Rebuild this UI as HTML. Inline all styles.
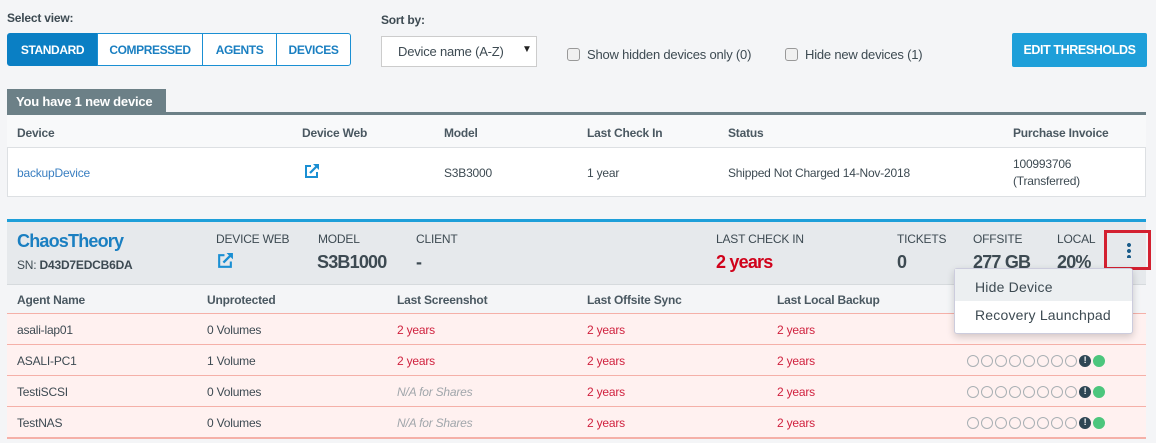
<!DOCTYPE html>
<html><head><meta charset="utf-8"><style>
*{box-sizing:border-box;margin:0;padding:0}
body{width:1156px;height:443px;background:#f4f5f7;font-family:"Liberation Sans",sans-serif;color:#3d4a52;position:relative;overflow:hidden;font-size:12px;letter-spacing:-0.2px}
.a{position:absolute;white-space:nowrap}
.b{font-weight:bold}
.btn{position:absolute;top:33px;height:33px;border:1px solid #1a8fd3;background:#fff;color:#1a7fc1;font-weight:bold;font-size:12px;letter-spacing:-0.4px;display:flex;align-items:center;justify-content:center}
.cb{position:absolute;width:13px;height:13px;border:1px solid #999;border-radius:3px;background:#f0f0f0;top:48px}
.th{font-weight:bold;color:#4a5861}
.row{position:absolute;left:7px;width:1139px;height:31px;background:#fff1f0;border-bottom:1px solid #f5b0a8}
.row span{position:absolute;top:9px}
.red{color:#d0223f}
.na{color:#a0a6ab;font-style:italic}
.lbl{font-size:12px;color:#3d4a52;top:232px}
.big{font-size:18px;font-weight:bold;top:252px;color:#3d4a52;letter-spacing:-0.8px}
.circ{position:absolute;top:355px;display:flex;gap:2px;left:967px}
.circ i{display:block;width:12px;height:12px;border:1.5px solid #a9b0b4;border-radius:50%}
.circ i.x{background:#2e4654;border-color:#2e4654;color:#fff;font-style:normal;font-size:9px;font-weight:bold;text-align:center;line-height:9px}
.circ i.g{background:#4cc67d;border-color:#4cc67d}
</style></head><body>
<div class="a b" style="left:7px;top:11px;font-size:12px">Select view:</div>
<div class="btn" style="left:7px;width:91px;background:#0a7fc4;color:#fff;border-color:#0a7fc4;border-radius:3px 0 0 3px">STANDARD</div>
<div class="btn" style="left:97px;width:106px">COMPRESSED</div>
<div class="btn" style="left:202px;width:75px">AGENTS</div>
<div class="btn" style="left:276px;width:75px;border-radius:0 3px 3px 0">DEVICES</div>
<div class="a b" style="left:381px;top:13px">Sort by:</div>
<div class="a" style="left:381px;top:36px;width:156px;height:31px;background:#fff;border:1px solid #ccc;font-size:13px"><span class="a" style="left:16px;top:7px">Device name (A-Z)</span><span class="a" style="left:140px;top:7px;font-size:10px;color:#222">▼</span></div>
<div class="cb" style="left:567px"></div><div class="a" style="left:587px;top:47px;font-size:13px">Show hidden devices only (0)</div>
<div class="cb" style="left:785px"></div><div class="a" style="left:805px;top:47px;font-size:13px">Hide new devices (1)</div>
<div class="a b" style="left:1012px;top:33px;width:135px;height:34px;background:#1e9fd9;color:#fff;font-size:12.5px;letter-spacing:-0.4px;display:flex;align-items:center;justify-content:center;border-radius:2px">EDIT THRESHOLDS</div>

<div class="a b" style="left:7px;top:89px;width:159px;height:24px;background:#6c8087;color:#fff;font-size:13px;padding:5px 0 0 9px">You have 1 new device</div>
<div class="a" style="left:7px;top:112px;width:1139px;height:3px;background:#6c8087"></div>
<div class="a" style="left:7px;top:115px;width:1139px;height:82px;background:#fff;border:1px solid #dde0e3;border-top:none"></div>
<div class="a" style="left:7px;top:115px;width:1139px;height:33px;background:#f8f9fa;border-bottom:1px solid #dde0e3"></div>
<div class="a th" style="left:17px;top:126px">Device</div>
<div class="a th" style="left:302px;top:126px">Device Web</div>
<div class="a th" style="left:444px;top:126px">Model</div>
<div class="a th" style="left:587px;top:126px">Last Check In</div>
<div class="a th" style="left:728px;top:126px">Status</div>
<div class="a th" style="left:1013px;top:126px">Purchase Invoice</div>
<div class="a" style="left:17px;top:166px;color:#3a7fc1">backupDevice</div>
<svg class="a" style="left:303px;top:163px" width="17" height="17" viewBox="0 0 17 17"><path d="M8 3H3v11h11V9" fill="none" stroke="#1a8fd3" stroke-width="2"/><path d="M10 1h6v6z" fill="#1a8fd3"/><path d="M7 10l7-7" stroke="#1a8fd3" stroke-width="2.2"/></svg>
<div class="a" style="left:444px;top:166px">S3B3000</div>
<div class="a" style="left:587px;top:166px">1 year</div>
<div class="a" style="left:728px;top:166px">Shipped Not Charged 14-Nov-2018</div>
<div class="a" style="left:1013px;top:156px;line-height:17px">100993706<br>(Transferred)</div>

<div class="a" style="left:7px;top:219px;width:1139px;height:3px;background:#1e9fd9"></div>
<div class="a" style="left:7px;top:222px;width:1139px;height:63px;background:#e6e9ec;border-bottom:1px solid #d6dadd"></div>
<div class="a b" style="left:17px;top:231px;font-size:18px;color:#1a7fc1;letter-spacing:-0.8px">ChaosTheory</div>
<div class="a" style="left:17px;top:258px;font-size:12px">SN: <b>D43D7EDCB6DA</b></div>
<div class="a lbl" style="left:216px">DEVICE WEB</div>
<svg class="a" style="left:216px;top:252px" width="18" height="18" viewBox="0 0 17 17"><path d="M8 3H3v11h11V9" fill="none" stroke="#1a8fd3" stroke-width="2"/><path d="M10 1h6v6z" fill="#1a8fd3"/><path d="M7 10l7-7" stroke="#1a8fd3" stroke-width="2.2"/></svg>
<div class="a lbl" style="left:318px">MODEL</div><div class="a big" style="left:317px">S3B1000</div>
<div class="a lbl" style="left:416px">CLIENT</div><div class="a big" style="left:416px">-</div>
<div class="a lbl" style="left:716px">LAST CHECK IN</div><div class="a big" style="left:716px;color:#d0021b">2 years</div>
<div class="a lbl" style="left:897px">TICKETS</div><div class="a big" style="left:897px">0</div>
<div class="a lbl" style="left:973px">OFFSITE</div><div class="a big" style="left:973px">277 GB</div>
<div class="a lbl" style="left:1057px">LOCAL</div><div class="a big" style="left:1057px">20%</div>
<div class="a" style="left:1104px;top:230px;width:47px;height:40px;border:3px solid #d32030"></div>
<div class="a" style="left:1127px;top:242px;width:4px;height:16px;background:radial-gradient(circle,#1a5c8a 1.8px,transparent 2.2px) 0 0/4px 6px"></div>

<div class="a" style="left:7px;top:285px;width:1139px;height:29px;background:#f4f5f7;border-bottom:1px solid #f5b0a8"></div>
<div class="a th" style="left:17px;top:293px">Agent Name</div>
<div class="a th" style="left:207px;top:293px">Unprotected</div>
<div class="a th" style="left:397px;top:293px">Last Screenshot</div>
<div class="a th" style="left:587px;top:293px">Last Offsite Sync</div>
<div class="a th" style="left:777px;top:293px">Last Local Backup</div>

<div class="row" style="top:314px"><span style="left:10px">asali-lap01</span><span style="left:200px">0 Volumes</span><span class="red" style="left:390px">2 years</span><span class="red" style="left:580px">2 years</span><span class="red" style="left:770px">2 years</span></div>
<div class="row" style="top:345px"><span style="left:10px">ASALI-PC1</span><span style="left:200px">1 Volume</span><span class="red" style="left:390px">2 years</span><span class="red" style="left:580px">2 years</span><span class="red" style="left:770px">2 years</span></div>
<div class="row" style="top:376px"><span style="left:10px">TestiSCSI</span><span style="left:200px">0 Volumes</span><span class="na" style="left:390px">N/A for Shares</span><span class="red" style="left:580px">2 years</span><span class="red" style="left:770px">2 years</span></div>
<div class="row" style="top:407px"><span style="left:10px">TestNAS</span><span style="left:200px">0 Volumes</span><span class="na" style="left:390px">N/A for Shares</span><span class="red" style="left:580px">2 years</span><span class="red" style="left:770px">2 years</span></div>
<div class="a" style="left:7px;top:438px;width:1139px;height:1px;background:#f5b0a8"></div>

<div class="circ"><i></i><i></i><i></i><i></i><i></i><i></i><i></i><i></i><i class="x">!</i><i class="g"></i></div>
<div class="circ" style="top:386px"><i></i><i></i><i></i><i></i><i></i><i></i><i></i><i></i><i class="x">!</i><i class="g"></i></div>
<div class="circ" style="top:417px"><i></i><i></i><i></i><i></i><i></i><i></i><i></i><i></i><i class="x">!</i><i class="g"></i></div>

<div class="a" style="left:954px;top:268px;width:179px;height:66px;background:#fff;border:1px solid #ccd;border-radius:3px;box-shadow:0 3px 8px rgba(0,0,0,.18)">
<div style="height:32px;background:#eceff1;padding:10px 0 0 20px;font-size:14px;letter-spacing:0.2px">Hide Device</div>
<div style="padding:6px 0 0 20px;font-size:14px;letter-spacing:0.2px">Recovery Launchpad</div>
</div>
</body></html>
